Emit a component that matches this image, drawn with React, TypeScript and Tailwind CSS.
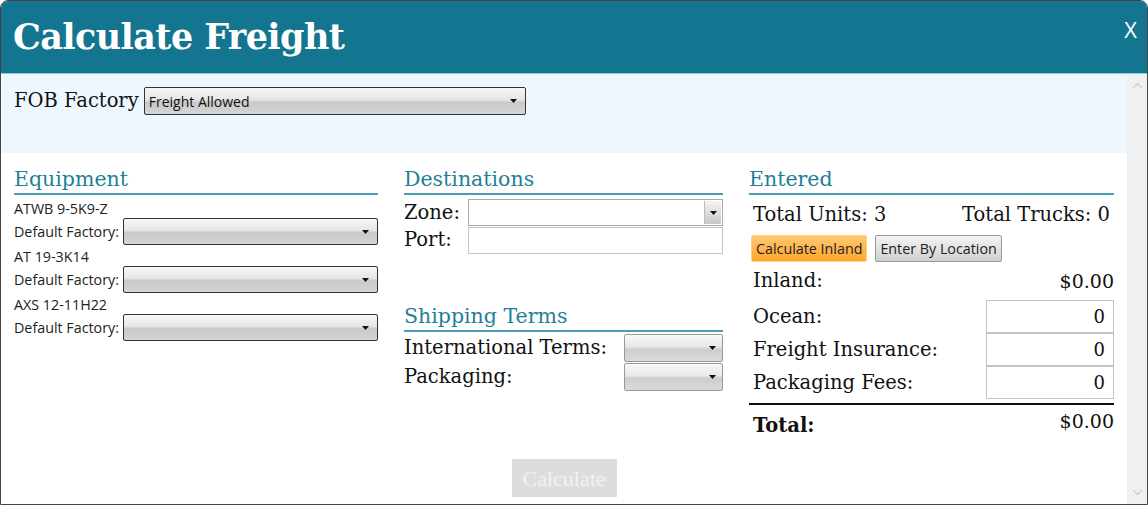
import React from "react";

const serif = "font-['DejaVu_Serif',serif]";
const sans = "font-['Open_Sans',sans-serif]";

function Caret({ className = "" }: { className?: string }) {
  return (
    <svg width="7" height="4" viewBox="0 0 7 4" className={className}>
      <path d="M0 0h7L3.5 4z" fill="#111" />
    </svg>
  );
}

function GlossSelect({
  value = "",
  className = "",
}: {
  value?: string;
  className?: string;
}) {
  return (
    <div
      className={`flex items-center justify-between rounded-[2px] border border-[#333] bg-[linear-gradient(180deg,#f6f6f6_0%,#e6e6e6_45%,#c9c9c9_55%,#d4d4d4_100%)] pl-1 pr-2 ${className}`}
    >
      <span className={`${sans} text-[14px] text-[#111]`}>{value}</span>
      <Caret />
    </div>
  );
}

function SmallSelect({ className = "" }: { className?: string }) {
  return (
    <div
      className={`flex items-center justify-end rounded-[2px] border border-[#9a9a9a] bg-[linear-gradient(180deg,#f8f8f8_0%,#e8e8e8_45%,#cdcdcd_55%,#dadada_100%)] pr-1.5 ${className}`}
    >
      <Caret />
    </div>
  );
}

function SectionTitle({ children }: { children: React.ReactNode }) {
  return (
    <div className={`${serif} border-b-2 border-[#4b9db3] pb-[1px] text-[20.5px] leading-[26px] text-[#1f7f98]`}>
      {children}
    </div>
  );
}

function EquipmentItem({ name }: { name: string }) {
  return (
    <div className="flex flex-col">
      <div className={`${sans} text-[14.3px] leading-[19px] text-[#222]`}>{name}</div>
      <div className="flex items-center">
        <span className={`${sans} w-[109px] whitespace-nowrap text-[14.3px] text-[#222]`}>Default Factory:</span>
        <GlossSelect className="h-[27px] flex-1" />
      </div>
    </div>
  );
}

function MoneyRow({ label, value }: { label: string; value: string }) {
  return (
    <div className="flex h-[33px] items-center justify-between pl-1">
      <span className="text-[19.5px] text-[#111]">{label}</span>
      <div className="flex h-[33px] w-[128px] items-center justify-end border border-[#c4c4c8] bg-white pr-2 text-[18px] text-[#111]">
        {value}
      </div>
    </div>
  );
}

export default function App() {
  return (
    <div className="flex h-[505px] w-[1148px] flex-col overflow-hidden rounded-t-[8px] border border-[#444] bg-white">
      <header className="flex h-[73px] shrink-0 items-center justify-between border-b border-[#8ccbe0] bg-[#13758f] pl-[12px] pr-[10px]">
        <h1 className={`${serif} text-[35px] font-bold tracking-[-0.6px] text-white`}>Calculate Freight</h1>
        <span className={`${sans} -mt-[16px] text-[22px] text-white`}>X</span>
      </header>

      <div className="flex min-h-0 flex-1">
        <main className={`${serif} flex min-w-0 flex-1 flex-col`}>
          <section className="flex h-[79px] shrink-0 items-start bg-[#eef7fe] pl-[13px] pt-[13px]">
            <span className="text-[19.5px] leading-[28px] text-[#111]">FOB Factory</span>
            <GlossSelect value="Freight Allowed" className="ml-[5px] h-[28px] w-[382px]" />
          </section>

          <div className="flex flex-1 pl-[13px] pt-[13px]">
            <section className="flex w-[364px] flex-col">
              <SectionTitle>Equipment</SectionTitle>
              <div className="mt-[4px] flex flex-col gap-[2px]">
                <EquipmentItem name="ATWB 9-5K9-Z" />
                <EquipmentItem name="AT 19-3K14" />
                <EquipmentItem name="AXS 12-11H22" />
              </div>
            </section>

            <div className="ml-[26px] flex w-[319px] flex-col">
              <section>
                <SectionTitle>Destinations</SectionTitle>
                <div className="mt-[4px] flex h-[27px] items-center">
                  <span className="w-[64px] text-[19.5px] text-[#111]">Zone:</span>
                  <div className="flex h-[27px] flex-1 items-stretch border border-[#aaa] bg-white">
                    <div className="flex-1" />
                    <div className="m-[1px] flex w-[17px] items-center justify-center border-l border-[#bbb] bg-[linear-gradient(180deg,#f4f4f4,#c8c8c8)]">
                      <Caret />
                    </div>
                  </div>
                </div>
                <div className="flex h-[28px] items-center">
                  <span className="w-[64px] text-[19.5px] text-[#111]">Port:</span>
                  <div className="h-[27px] flex-1 border border-[#c4c4c8] bg-white" />
                </div>
              </section>

              <section className="mt-[49px]">
                <SectionTitle>Shipping Terms</SectionTitle>
                <div className="mt-[1px] flex h-[29px] items-center justify-between">
                  <span className="text-[19.5px] text-[#111]">International Terms:</span>
                  <SmallSelect className="h-[28px] w-[99px]" />
                </div>
                <div className="flex h-[29px] items-center justify-between">
                  <span className="text-[19.5px] text-[#111]">Packaging:</span>
                  <SmallSelect className="h-[28px] w-[99px]" />
                </div>
              </section>
            </div>

            <section className="ml-[26px] flex w-[365px] flex-col">
              <SectionTitle>Entered</SectionTitle>
              <div className="flex h-[40px] items-center justify-between pl-1 pr-1">
                <span className="text-[19.5px] text-[#111]">Total Units: 3</span>
                <span className="text-[19.5px] text-[#111]">Total Trucks: 0</span>
              </div>
              <div className="flex gap-[8px] pl-[2px]">
                <button className={`${sans} h-[27px] rounded-[2px] border border-[#ffd27a] bg-[linear-gradient(180deg,#ffc877_0%,#ffb54c_50%,#ffa730_100%)] px-[4px] text-[14.3px] text-[#222]`}>
                  Calculate Inland
                </button>
                <button className={`${sans} h-[27px] rounded-[2px] border border-[#9a9a9a] bg-[linear-gradient(180deg,#f4f4f4_0%,#e2e2e2_50%,#cfcfcf_100%)] px-[4px] text-[14.3px] text-[#222]`}>
                  Enter By Location
                </button>
              </div>
              <div className="flex h-[38px] items-center justify-between pl-1">
                <span className="text-[19.5px] text-[#111]">Inland:</span>
                <span className="text-[19px] text-[#111]">$0.00</span>
              </div>
              <MoneyRow label="Ocean:" value="0" />
              <MoneyRow label="Freight Insurance:" value="0" />
              <MoneyRow label="Packaging Fees:" value="0" />
              <div className="mt-[4px] border-t-2 border-[#111]" />
              <div className="flex items-start justify-between pl-1 pt-[2px]">
                <span className="mt-[4px] text-[19.5px] font-bold text-[#111]">Total:</span>
                <span className="text-[19px] text-[#111]">$0.00</span>
              </div>
            </section>
          </div>

          <div className="flex shrink-0 justify-center pb-[7px]">
            <button className="h-[38px] w-[105px] bg-[#dddddd] font-['Liberation_Serif',serif] text-[22px] text-[#f2f2f2]">
              Calculate
            </button>
          </div>
        </main>

        <aside className="flex w-[20px] shrink-0 flex-col items-center justify-between bg-[#f0f0f0] py-[8px]">
          <svg width="11" height="7" viewBox="0 0 11 7">
            <path d="M1 6l4.5-4.5L10 6" fill="none" stroke="#d0d0d0" strokeWidth="1.3" />
          </svg>
          <svg width="11" height="7" viewBox="0 0 11 7">
            <path d="M1 1l4.5 4.5L10 1" fill="none" stroke="#d0d0d0" strokeWidth="1.3" />
          </svg>
        </aside>
      </div>
    </div>
  );
}
